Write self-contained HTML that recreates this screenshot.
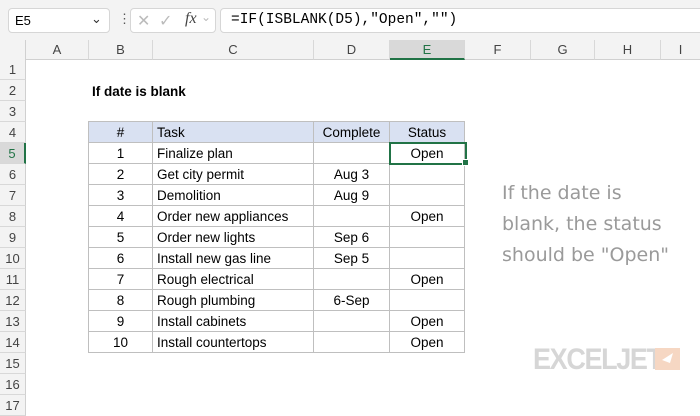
<!DOCTYPE html>
<html><head><style>
body{margin:0;width:700px;height:400px;overflow:hidden;background:#fff;font-family:"Liberation Sans",Calibri,sans-serif;position:relative}
.a{position:absolute}
.top{left:0;top:0;width:700px;height:40px;background:#f3f3f3}
.box{background:#fff;border:1px solid #d6d6d6;border-radius:4px}
.ch{top:40px;height:19px;background:#f3f3f3;border-bottom:1px solid #d0d0d0;border-right:1px solid #d8d8d8;font-size:13px;color:#444;text-align:center;line-height:20px}
.rh{left:0;width:25px;height:20px;background:#f3f3f3;border-bottom:1px solid #d8d8d8;border-right:1px solid #d0d0d0;font-size:13px;color:#444;text-align:center;line-height:21px}
.c{height:20px;border-right:1px solid #bfbfbf;border-bottom:1px solid #bfbfbf;font-size:13.5px;line-height:21px;color:#000;white-space:nowrap;overflow:hidden}
.n{text-align:center}
.g{color:#9a9a9a;font-family:"Comic Sans MS","DejaVu Sans",cursive;font-size:19px;line-height:31px}
</style></head><body>
<div class="a top"></div>
<div class="a box" style="left:8px;top:8px;width:100px;height:23px"><span class="a" style="left:6px;top:4px;font-size:13px">E5</span><span class="a" style="left:82px;top:2px;font-size:13px;color:#333">&#8964;</span></div>
<div class="a" style="left:118px;top:11px;font-size:13px;color:#555">&#8942;</div>
<div class="a box" style="left:130px;top:8px;width:84px;height:23px;color:#bbb;font-size:16px"><span class="a" style="left:6px;top:2px">&#10005;</span><span class="a" style="left:28px;top:2px">&#10003;</span><span class="a" style="left:54px;top:1px;color:#444;font-family:'Liberation Serif',serif;font-style:italic">fx</span><span class="a" style="left:70px;top:1px;font-size:12px">&#8964;</span></div>
<div class="a box" style="left:220px;top:8px;width:490px;height:23px"><span class="a" style="left:10px;top:3px;font-family:'Liberation Mono',monospace;font-size:14.5px">=IF(ISBLANK(D5),"Open","")</span></div>
<div class="a" style="left:0;top:40px;width:25px;height:19px;background:#f3f3f3;border-right:1px solid #d0d0d0;border-bottom:1px solid #d0d0d0"></div>
<div class="a ch" style="left:26px;width:62px">A</div>
<div class="a ch" style="left:89px;width:63px">B</div>
<div class="a ch" style="left:153px;width:160px">C</div>
<div class="a ch" style="left:314px;width:75px">D</div>
<div class="a ch" style="left:390px;width:74px;background:#d9d9d9;border-bottom:2px solid #217346;height:18px;color:#217346">E</div>
<div class="a ch" style="left:465px;width:65px">F</div>
<div class="a ch" style="left:531px;width:63px">G</div>
<div class="a ch" style="left:595px;width:65px">H</div>
<div class="a ch" style="left:661px;width:39px">I</div>
<div id="rows"></div>
<div class="a" style="left:92px;top:81px;font-weight:bold;font-size:13.5px;line-height:21px">If date is blank</div>
<div id="tbl"></div>
<div class="a" style="left:389px;top:142px;width:74px;height:19px;border:2px solid #217346"></div>
<div class="a" style="left:462px;top:159px;width:5px;height:5px;background:#217346;border:1px solid #fff"></div>
<div class="a g" style="left:502px;top:178px">If the date is<br>blank, the status<br>should be "Open"</div>
<div class="a" style="left:533px;top:343px;font-size:30px;font-weight:bold;color:#d6d6d6;letter-spacing:-1.5px;transform:scaleX(0.9);transform-origin:left;font-family:'Liberation Sans',sans-serif">EXCELJET</div>
<div class="a" style="left:655px;top:348px;width:25px;height:22px;background:#f6d7c3"></div>
<svg class="a" style="left:655px;top:348px" width="25" height="22"><path d="M18 5 L7 12 L15 15 Z" fill="#fff"/></svg>
<script>
var r='';for(var i=1;i<=17;i++){r+='<div class="a rh" style="top:'+(59+(i-1)*21)+'px'+(i==5?';background:#d9d9d9;color:#217346;border-right:2px solid #217346;width:24px':'')+'">'+i+'</div>'}
document.getElementById('rows').outerHTML=r;
var d=[['#','Task','Complete','Status'],['1','Finalize plan','','Open'],['2','Get city permit','Aug 3',''],['3','Demolition','Aug 9',''],['4','Order new appliances','','Open'],['5','Order new lights','Sep 6',''],['6','Install new gas line','Sep 5',''],['7','Rough electrical','','Open'],['8','Rough plumbing','6-Sep',''],['9','Install cabinets','','Open'],['10','Install countertops','','Open']];
var xs=[89,153,314,390,465],t='';
t+='<div class="a" style="left:88px;top:121px;width:1px;height:232px;background:#bfbfbf"></div><div class="a" style="left:88px;top:121px;width:377px;height:1px;background:#bfbfbf"></div>';
for(var i=0;i<d.length;i++){var y=122+i*21;for(var j=0;j<4;j++){var w=xs[j+1]-xs[j]-1;t+='<div class="a c '+(j==1?'':'n')+'" style="left:'+xs[j]+'px;top:'+y+'px;width:'+(j==1?w-4:w)+'px'+(j==1?';padding-left:4px':'')+(i==0?';background:#d9e1f2':'')+'">'+d[i][j]+'</div>'}}
document.getElementById('tbl').outerHTML=t;
</script>
</body></html>
